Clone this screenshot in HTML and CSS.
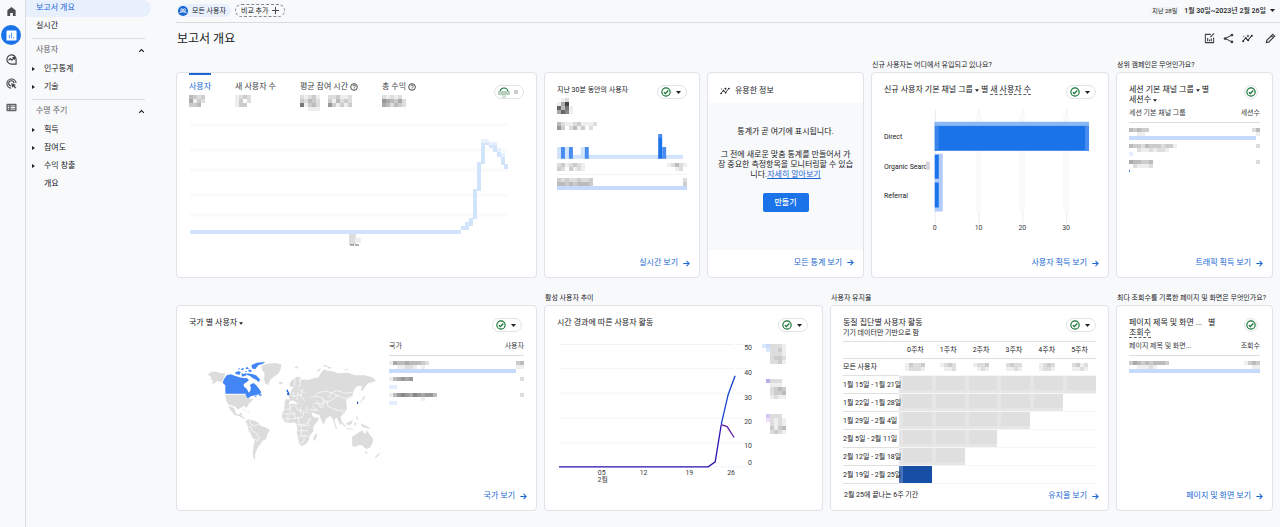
FILE: index.html
```html
<!DOCTYPE html>
<html lang="ko">
<head>
    <meta charset="UTF-8">
    <meta name="viewport" content="width=device-width, initial-scale=1.0">
    <title>보고서 개요</title>
    <link rel="stylesheet" href="styles.css">
</head>
<body>
    <svg class="defs" aria-hidden="true">
        <symbol id="i-check" viewBox="0 0 24 24"><circle cx="12" cy="12" r="10" fill="none" stroke="#137333" stroke-width="2.8"/><path d="M7 12.5l3.5 3.5L17.5 8.5" fill="none" stroke="#137333" stroke-width="3"/></symbol>
        <symbol id="i-caret" viewBox="0 0 10 6"><path d="M0 0h10L5 6z" fill="currentColor"/></symbol>
        <symbol id="i-arrow" viewBox="0 0 24 24"><path d="M1 12h20M12 3l9 9-9 9" fill="none" stroke="currentColor" stroke-width="3.6"/></symbol>
        <symbol id="i-help" viewBox="0 0 24 24"><circle cx="12" cy="12" r="10" fill="none" stroke="currentColor" stroke-width="2.8"/><path d="M8.5 9.5a3.5 3.5 0 1 1 5.2 3c-1.2.8-1.7 1.2-1.7 2.5M12 16.500v2.500" fill="none" stroke="currentColor" stroke-width="2.6"/></symbol>
        <symbol id="i-up" viewBox="0 0 24 24"><path d="M4 17l8-8 8 8" fill="none" stroke="currentColor" stroke-width="4"/></symbol>
        <symbol id="i-spark" viewBox="0 0 24 24"><path d="M2 18l6-7 5 5 9-11" fill="none" stroke="currentColor" stroke-width="2.2"/><circle cx="2.5" cy="18" r="2" fill="currentColor"/><circle cx="8.5" cy="11" r="2" fill="currentColor"/><circle cx="13.5" cy="16" r="2" fill="currentColor"/><circle cx="21.5" cy="6" r="2" fill="currentColor"/><path d="M13 3l1 2.500L16.500 6.500 14 7.500 13 10l-1-2.500L9.500 6.500 12 5.500zM4 5l.6 1.500L6 7l-1.400.6L4 9l-.6-1.400L2 7l1.400-.5z" fill="currentColor"/></symbol>
    </svg>

    <div id="wrapper">
        <nav class="rail">
            <a href="#" aria-label="홈"><svg viewBox="0 0 24 24"><path d="M3 22V9.5L12 2l9 7.5V22h-6v-7H9v7z" fill="#4a4d51"/></svg></a>
            <a href="#" class="current" aria-label="보고서"><svg viewBox="0 0 24 24"><rect x="1" y="1" width="22" height="22" rx="2" fill="#fff"/><path d="M7.500 18v-7M12 18V6M16.500 18v-3" stroke="#5a9bf5" stroke-width="2.4"/></svg></a>
            <a href="#" aria-label="탐색"><svg viewBox="0 0 24 24"><path d="M22 22h-9.500A10 10 0 1 1 22 12z" fill="none" stroke="#3c4043" stroke-width="2.5"/><path d="M5.500 14l4-4 3.500 3.500L18 8.500M14 8h4.500v4.500" fill="none" stroke="#3c4043" stroke-width="2.4"/></svg></a>
            <a href="#" aria-label="광고"><svg viewBox="0 0 24 24"><path d="M11 22a10 10 0 1 1 11-11M11.500 17.500a5.800 5.800 0 1 1 6-6" fill="none" stroke="#3c4043" stroke-width="2.4"/><path d="M11 11l11 4-4 2 4.500 4.500-2 1.500L16 18.500 14.500 22z" fill="#3c4043"/></svg></a>
            <a href="#" aria-label="구성"><svg viewBox="0 0 24 24"><rect x="1" y="4" width="22" height="16" rx="2" fill="#5f6368"/><path d="M4 8.500h3M4 12h3M4 15.500h3M10 8.500h10M10 12h10M10 15.500h10" stroke="#f8f9fa" stroke-width="2"/></svg></a>
        </nav>

        <nav class="sidebar">
            <a href="#" class="item active">보고서 개요</a>
            <a href="#" class="item">실시간</a>
            <section>
                <button class="group">사용자<svg><use href="#i-up"/></svg></button>
                <a href="#" class="sub more">인구통계</a>
                <a href="#" class="sub more">기술</a>
            </section>
            <section>
                <button class="group">수명 주기<svg><use href="#i-up"/></svg></button>
                <a href="#" class="sub more">획득</a>
                <a href="#" class="sub more">참여도</a>
                <a href="#" class="sub more">수익 창출</a>
                <a href="#" class="sub">개요</a>
            </section>
        </nav>

        <main>
            <header class="topbar">
                <button class="chip"><svg viewBox="0 0 24 24"><circle cx="12" cy="12" r="12" fill="#1967d2"/><circle cx="9" cy="9" r="2.5" fill="none" stroke="#fff" stroke-width="2"/><circle cx="15.5" cy="9" r="2.5" fill="none" stroke="#fff" stroke-width="2"/><path d="M4 16c2-3 14-3 16 0" fill="none" stroke="#fff" stroke-width="2.5"/></svg>모든 사용자</button>
                <button class="chip dashed">비교 추가<svg viewBox="0 0 12 12"><path d="M6 0v12M0 6h12" stroke="#3c4043" stroke-width="1.6"/></svg></button>
                <button class="date"><span class="range">지난 28일</span>1월 30일~2023년 2월 26일<svg class="caret"><use href="#i-caret"/></svg></button>
            </header>

            <div class="titlebar">
                <h1>보고서 개요</h1>
                <div class="tools">
                    <button aria-label="맞춤설정"><svg viewBox="0 0 24 24"><path d="M15 3H3v18h18V10" fill="none" stroke="#3c4043" stroke-width="2.2"/><path d="M8 18v-7M12 18v-4M16 18v-6M14 9l8-8" stroke="#3c4043" stroke-width="2.4"/></svg></button>
                    <button aria-label="공유"><svg viewBox="0 0 24 24"><path d="M20 4L5 12l15 8" fill="none" stroke="#3c4043" stroke-width="2.2"/><circle cx="19.5" cy="4.5" r="3" fill="#3c4043"/><circle cx="4.5" cy="12" r="3" fill="#3c4043"/><circle cx="19.5" cy="19.5" r="3" fill="#3c4043"/></svg></button>
                    <button aria-label="통계"><svg><use href="#i-spark"/></svg></button>
                    <button class="edit" aria-label="수정"><svg viewBox="0 0 24 24"><path d="M3 21l1-5L17 3l4 4L8 20zM14 6l4 4" fill="none" stroke="#3c4043" stroke-width="2.5"/></svg></button>
                </div>
            </div>

            <div class="grid row1">
                <section class="cell">
                    <h2></h2>
                    <div class="card">
                        <div class="body overview">
                            <div class="head">
                                <div class="metrics">
                                    <button class="metric active"><span>사용자</span><svg class="mosaic" data-cells="bcdc|aecd|ccbf"></svg></button>
                                    <button class="metric"><span>새 사용자 수</span><svg class="mosaic" data-cells="edcd|ecfd|eccf"></svg></button>
                                    <button class="metric"><span>평균 참여 시간<svg class="help"><use href="#i-help"/></svg></span><svg class="mosaic" data-cells="dedcef.ddceed|cdbcdf.cebdcd|7ecbdf.9cecec|ffeeef"></svg></button>
                                    <button class="metric"><span>총 수익<svg class="help"><use href="#i-help"/></svg></span><svg class="mosaic" data-cells="dededf|9abcad|abdbcd"></svg></button>
                                </div>
                                <button class="pill" aria-label="데이터 품질"><svg class="masked" viewBox="0 0 20 12"><path d="M2 6a4 4 0 0 1 8 0" fill="none" stroke="#137333" stroke-width="1.2"/><path d="M0 5h12v4H0z" fill="#b5d0bd"/><path d="M4 9h4v3H4z" fill="#cfe3d5"/><path d="M16 4h4v4h-4z" fill="#ccc"/></svg></button>
                            </div>
                            <svg class="chart" viewBox="0 0 335 132">
                                <path d="M1 11h318M1 36h318M1 56h318M1 81h318M1 101h318" stroke="#fafafa" stroke-width="3"/>
                                <g fill="#d2e3fc">
                                    <rect x="1" y="116" width="271" height="4"/>
                                    <rect x="272" y="112" width="8" height="4"/><rect x="276" y="108" width="4" height="6"/><rect x="280" y="104" width="4" height="8"/>
                                    <rect x="284" y="75" width="4" height="30"/><rect x="288" y="48" width="4" height="29"/><rect x="292" y="26" width="4" height="24"/>
                                    <rect x="296" y="27" width="4" height="4"/><rect x="300" y="30" width="8" height="4"/><rect x="304" y="34" width="4" height="4"/><rect x="308" y="38" width="4" height="5"/><rect x="312" y="43" width="4" height="8"/><rect x="315" y="50" width="4" height="5"/>
                                </g>
                                <g fill="#e8f0fe"><rect x="292" y="25" width="8" height="4"/><rect x="300" y="28" width="8" height="3"/><rect x="308" y="34" width="4" height="4"/><rect x="312" y="39" width="4" height="4"/></g>
                                <rect x="160" y="120" width="7" height="11" fill="#ddd"/><rect x="166" y="124" width="6" height="5" fill="#eee"/><path d="M161 131h4M166 131h4" stroke="#666"/>
                            </svg>
                        </div>
                    </div>
                </section>

                <section class="cell">
                    <h2></h2>
                    <div class="card">
                        <div class="body">
                            <div class="head">
                                <h3 class="small">지난 30분 동안의 사용자</h3>
                                <button class="pill" aria-label="데이터 품질"><svg class="check"><use href="#i-check"/></svg><svg class="caret"><use href="#i-caret"/></svg></button>
                            </div>
                            <div class="realtime">
                                <svg class="mosaic" data-cells=".ed.|ea4f|6b7e|a68e"></svg>
                                <svg class="mosaic" data-cells="bdeedceeed|9cfdbecfdf"></svg>
                                <svg class="chart" viewBox="0 0 131 28">
                                    <rect y="22" width="127" height="4" fill="#d2e3fc"/>
                                    <path d="M0 14h4v12H0zM8 14h4v12H8zM24 14h4v12h-4z" fill="#d2e3fc"/>
                                    <path d="M4 14h4v12H4zM12 14h4v12h-4zM28 14h4v12h-4z" fill="#4a8df0"/>
                                    <path d="M102 4h4v22h-4z" fill="#1a73e8"/><path d="M102 1h4v4h-4zM106 14h4v12h-4z" fill="#4a8df0"/>
                                </svg>
                                <div class="mrow"><svg class="mosaic" data-cells="dcedcde|cdfcede"></svg><svg class="mosaic" data-cells="edbde|ffedf"></svg></div>
                                <hr>
                                <div class="mrow"><svg class="mosaic" data-cells="cdcddcddc|bbcbcbbbc"></svg><svg class="mosaic" data-cells="d|c"></svg></div>
                                <div class="meter"></div>
                            </div>
                        </div>
                        <a href="#" class="foot">실시간 보기<svg><use href="#i-arrow"/></svg></a>
                    </div>
                </section>

                <section class="cell">
                    <h2></h2>
                    <div class="card">
                        <h3 class="insight-head"><svg><use href="#i-spark"/></svg>유용한 정보</h3>
                        <div class="insight">
                            <p>통계가 곧 여기에 표시됩니다.</p>
                            <p>그 전에 새로운 맞춤 통계를 만들어서 가<br>장 중요한 측정항목을 모니터링할 수 있습<br>니다.<a href="#">자세히 알아보기</a></p>
                            <button class="btn">만들기</button>
                        </div>
                        <a href="#" class="foot">모든 통계 보기<svg><use href="#i-arrow"/></svg></a>
                    </div>
                </section>

                <section class="cell">
                    <h2>신규 사용자는 어디에서 유입되고 있나요?</h2>
                    <div class="card">
                        <div class="body">
                            <div class="head">
                                <h3><button>신규 사용자 기본 채널 그룹<svg class="caret"><use href="#i-caret"/></svg></button> 별 <span class="dotted">새 사용자 수</span></h3>
                                <button class="pill" aria-label="데이터 품질"><svg class="check"><use href="#i-check"/></svg><svg class="caret"><use href="#i-caret"/></svg></button>
                            </div>
                            <svg class="chart" viewBox="0 3 213 131">
                                <path d="M51.500 9v115M95.500 9v115M139.500 9v115M183.500 9v115" stroke="#e8eaed"/>
                                <path d="M95 14v98M139 14v98M183 14v98" stroke="#fafafa" stroke-width="6"/>
                                <rect x="51" y="22" width="155" height="29" fill="#1a73e8"/>
                                <rect x="51" y="22" width="155" height="4" fill="#8ab8f4"/><rect x="202" y="26" width="4" height="25" fill="#4a8df0"/><rect x="51" y="26" width="4" height="25" fill="#3b84ec"/>
                                <path d="M51 54h8v58h-8z" fill="#aecbfa"/><path d="M51 55h4v24h-4zM51 83h4v25h-4z" fill="#1a73e8"/>
                                <g class="labels strong"><text x="0" y="39">Direct</text><text x="0" y="69">Organic Searc</text><text x="0" y="98">Referral</text></g>
                                <rect x="42" y="62" width="4" height="8" fill="#d5d0da"/>
                                <g class="labels middle"><text x="51" y="131">0</text><text x="95" y="131">10</text><text x="139" y="131">20</text><text x="183" y="131">30</text></g>
                            </svg>
                        </div>
                        <a href="#" class="foot">사용자 획득 보기<svg><use href="#i-arrow"/></svg></a>
                    </div>
                </section>

                <section class="cell">
                    <h2>상위 캠페인은 무엇인가요?</h2>
                    <div class="card">
                        <div class="body">
                            <div class="head">
                                <h3><button>세션 기본 채널 그룹<svg class="caret"><use href="#i-caret"/></svg></button> 별<br><button>세션수<svg class="caret"><use href="#i-caret"/></svg></button></h3>
                                <button class="pill round" aria-label="데이터 품질"><svg class="check"><use href="#i-check"/></svg></button>
                            </div>
                            <table class="list">
                                <thead><tr><th>세션 기본 채널 그룹</th><th>세션수</th></tr></thead>
                                <tbody>
                                    <tr><td><svg class="mosaic" data-cells="bcbcc|ffeef"></svg></td><td><svg class="mosaic" data-cells="db|fe"></svg></td></tr>
                                    <tr class="bar"><td colspan="2"><div class="meter" style="width: 97%"></div></td></tr>
                                    <tr><td><svg class="mosaic" data-cells="bccdbcccdcce|ffdeededdef."></svg></td><td><svg class="mosaic" data-cells="d|f"></svg></td></tr>
                                    <tr class="bar"><td colspan="2"><div class="meter pale" style="width: 3%"></div></td></tr>
                                    <tr><td><svg class="mosaic" data-cells="abbccb|fdeeed"></svg></td><td><svg class="mosaic" data-cells="d|f"></svg></td></tr>
                                    <tr class="bar"><td colspan="2"><div class="meter dark" style="width: 1%"></div></td></tr>
                                </tbody>
                            </table>
                        </div>
                        <a href="#" class="foot">트래픽 획득 보기<svg><use href="#i-arrow"/></svg></a>
                    </div>
                </section>
            </div>

            <div class="grid row2">
                <section class="cell">
                    <h2></h2>
                    <div class="card">
                        <div class="body">
                            <div class="head">
                                <h3><button>국가 별 사용자<svg class="caret"><use href="#i-caret"/></svg></button></h3>
                                <button class="pill shift" aria-label="데이터 품질"><svg class="check"><use href="#i-check"/></svg><svg class="caret"><use href="#i-caret"/></svg></button>
                            </div>
                            <div class="geo">
                                <svg class="map" viewBox="-33 -12 576 360">
                                    <g fill="#dcdcdc">
                                        <path d="M22 72l8-2 4-5 14 0 10 4 18 1-8 24-8 2-8-4-8 8-10 1 6-9-8-4 2-6z"/>
                                        <path d="M76 134h60l6 8 10 5 10-1-8 8-8 9-4 8-4 3-4-7-14 8-6 4-8-9-18-4-8-10-2-10z"/>
                                        <path d="M80 168l16 2 8 7 4 14 7 3 7-6 4 1-2 8 6 4 7 6-8-2-11-6-14-4-10-11-8-12zM124 176l14 4-2 2zM140 184l8 1-1 3z"/>
                                        <path d="M184 48l16-7 28-2 17 5-3 14-6 12-16 12-9 7-7 16-8-4-4-14 2-16-8-13z"/>
                                        <path d="M236 97l8-2 6 3-6 4-7-1z"/>
                                        <path d="M137 213l8-5 8 1 12 4 10 5 6 9 14 5 12 6 2 6-8 10-2 13-11 5-6 9-6 8-5 7-3 9-3 10 1 14-5-3-3-16 2-20 4-18-8-11-10-17-1-10z"/>
                                        <path d="M268 102l8-12 12-9 12-1 2 6-6 4 2 14-8 6-2 8-6 1-2-9-8 2zM298 84l8 6 4 14-8 8-10-2 8-12z"/>
                                        <path d="M258 148h12l-4-6-2-8 10-6 12-4 10-6h18l6 12-2 10-6 10 8 4 12 1-2 6-16 0-8-3-8-4-10-4 8 10-2 2-14-11-10 2-4 10-10 3-3-7z"/>
                                        <path d="M300 92l12-4 12 2 20-6 12-2 6-12 10-12 10 4 16 2 16 6 30-2 20 8 30 0 22 6 12 10-8 4-16 4-8 10-10 14-3-2 2-14-12 0-10 10-6 20-10 8-8 2 0 12 2 16-8 14-12 10 4 12-2 12-4-2-6-14-4-6-6 8 5 18 5 10-6-4-6-18-4-12-8-6-12 10-5 17-6-10-8-20-10-3-12-5-6 14-15 12-6 4-5-12-12-22 2-10-16 1-8-3 2-7 10-2 14 1-2-8-8-3-10-2-6-12 4-18z"/>
                                        <path d="M254 164l16-2 14-1 6 7 12 2 22-1 6 12 8 18 8 4 11-2-4 12-12 14-2 18-10 12-2 12-10 14-11 5-8-5-4-20-4-18 2-14-8-14-12 2-16-2-10-14 0-12 6-10z"/>
                                        <path d="M347 253l4-4-2 14-5 9-4-2 2-12z"/>
                                        <path d="M456 260l12-7 10-7 10-5 4 8 6 2 2-11 8 12 10 13 1 10-8 17-10 5-8-3-4-7-10-2-14 5-8-1z"/>
                                        <path d="M421 210l8 8 9 13-4-1-12-14zM440 218l14-5 4-5-2 12-6 5-10-1zM462 218l8 0-4 12zM440 234l22 3-1 2-20-2zM480 220l14 5 12 7 6 6-13-4-10-2zM468 198l5 2 2 12-5-6zM484 160l2-8 6-5 3-9-5 1-4 10-5 8zM494 304l9 2-5 7zM526 320l8-8 8-4-6 9-12 9zM283 52l12-4-4 8zM366 48l14-4-2 6zM350 66l5-8 10-3-8 8zM376 47l20 6-8 4zM428 56l20 2-8 2z"/>
                                    </g>
                                    <g fill="#4285f4">
                                        <path d="M80 76l12-3 12 4 12 4 12 3 12 1 7 5-9 8-7 4 1 8 8 6 7 12 5-8-1-8-1-8 10-5 8 6 8 10 8 12-4 5-14 4-12 2-10 7-4-4-4-10H76V106l-8-8 4-10z"/>
                                        <path d="M154 46l16-8 26-2-8 6-12 3-10 12-9-1zM104 68l12-5 6 3-3 8-10-1zM122 58l6-4 5 3-6 4zM136 54l6-3 5 5-7 2zM142 70l14 2 12 4 12 12-3 9-8-7-10-5-9-7-10-4zM124 70l8 2 6-4 2 8-14 4zM148 58l8 4-4 5-8-4zM114 56l6-3-3 7zM134 63l7 0-1 4zM178 132l9 2-5 4-6-2zM164 137l8 0-6 5zM130 88l10-4 4 6-9 2z"/>
                                        <path d="M262 118l4 8 3 8-8 1 2-8-4-4z" fill="#0b57d0"/><path d="M471 154l4 3-1 5-3-1z" fill="#174ea6"/>
                                    </g>
                                    <path d="M82 168l16 0 10 6M138 228l14 2 4 12 14 8 8 14-8 12M150 206v16l14 6 14-6M150 242l4 28M156 266l14 4M160 278l-4 44M252 178h16l12-14M268 162l4 28M286 164l4 14 26 8M302 170v22M320 170l2 20M244 192h44M264 192v24M280 186l6 20 22-6 4-14M250 206h38M294 200l4 24 22-2 8-16M286 222l22 6 22-2M290 242h36M296 260l16-4 16 4M304 228v32M312 256v18l-12 6M324 224l8-20M336 164l8 12 10 6M328 178l24 4M342 160l20 2 6 12M352 152l10 22M362 162l18-6M372 168l-4-24-22-6-14 6M346 138l8-10 24-5 22 7 12 8-14 10-16 8-14-8M386 144l8-16 18-6 24 8 22-4 8 6-8 8-26 6-22-12M384 150l-2 16 16 10 18 6 12-2M404 176l10 6M426 182l6 16M434 180l10 14M270 130l12 10 12-6 14 2M280 126l2 14M294 126v12l-4 12M308 116l-6 20 12 16M296 118l20 12M286 84l-4 26M300 84l2 20-10 8M466 150l-10-6 12-10" fill="none" stroke="#fff" stroke-width="2"/>
                                    <path d="M146 96l6 2-2 8 2 8-5 8-5-10-8-6 1-6z" fill="#fff"/>
                                </svg>
                                <table class="list">
                                    <thead><tr><th>국가</th><th>사용자</th></tr></thead>
                                    <tbody>
                                        <tr><td><svg class="mosaic" data-cells="eabbabbbcd|ffeeddefef"></svg></td><td><svg class="mosaic" data-cells="cb|ee"></svg></td></tr>
                                        <tr class="bar"><td colspan="2"><div class="meter" style="width: 94%"></div></td></tr>
                                        <tr><td><svg class="mosaic" data-cells="eba9a9|ffffff"></svg></td><td><svg class="mosaic" data-cells="d|f"></svg></td></tr>
                                        <tr class="bar"><td colspan="2"><div class="meter pale" style="width: 6%"></div></td></tr>
                                        <tr><td><svg class="mosaic" data-cells="eb989a89a99b|ffffffffefff"></svg></td><td><svg class="mosaic" data-cells="d|f"></svg></td></tr>
                                        <tr class="bar"><td colspan="2"><div class="meter pale" style="width: 6%"></div></td></tr>
                                    </tbody>
                                </table>
                            </div>
                        </div>
                        <a href="#" class="foot">국가 보기<svg><use href="#i-arrow"/></svg></a>
                    </div>
                </section>

                <section class="cell">
                    <h2>활성 사용자 추이</h2>
                    <div class="card">
                        <div class="body">
                            <div class="head">
                                <h3>시간 경과에 따른 사용자 활동</h3>
                                <button class="pill shift" aria-label="데이터 품질"><svg class="check"><use href="#i-check"/></svg><svg class="caret"><use href="#i-caret"/></svg></button>
                            </div>
                            <div class="trend">
                                <svg class="chart" viewBox="0 0 198 148">
                                    <path d="M2 8.500h176m2 0h16M2 32.500h176m2 0h16M2 57.500h176m2 0h16M2 82.500h176m2 0h16M2 107.500h176m2 0h16M2 131.500h176m2 0h16" stroke="#f1f3f4"/>
                                    <g class="labels end"><text x="196" y="14">50</text><text x="196" y="39">40</text><text x="196" y="64">30</text><text x="196" y="88">20</text><text x="196" y="113">10</text><text x="196" y="130">0</text></g>
                                    <g class="labels middle"><text x="45" y="140">05</text><text x="46" y="147">2월</text><text x="87" y="140">12</text><text x="133" y="140">19</text><text x="175" y="140">26</text></g>
                                    <path d="M165 89l7-30 7-19" fill="none" stroke="#1442d0" stroke-width="1.3"/>
                                    <path d="M165 89l6 2 7 11" fill="none" stroke="#681da8" stroke-width="1.3"/>
                                    <path d="M2 131.500h150l7-5 6-37" fill="none" stroke="#2a12b0" stroke-width="1.3"/>
                                </svg>
                                <div class="legend">
                                    <svg class="mosaic" data-cells="bBddde|fbddce|..ddde|..dccd|..ddce"></svg>
                                    <svg class="mosaic" data-cells="fVdddf|..eeef|..dcbc|..dccb|..edee"></svg>
                                    <svg class="mosaic" data-cells="fPdddf|fpdede|..dede|..cecb|..dcde"></svg>
                                </div>
                            </div>
                        </div>
                    </div>
                </section>

                <section class="cell">
                    <h2>사용자 유지율</h2>
                    <div class="card">
                        <div class="body">
                            <div class="head">
                                <h3>동질 집단별 사용자 활동<small>기기 데이터만 기반으로 함</small></h3>
                                <button class="pill" aria-label="데이터 품질"><svg class="check"><use href="#i-check"/></svg><svg class="caret"><use href="#i-caret"/></svg></button>
                            </div>
                            <table class="cohort">
                                <thead><tr><th></th><th>0주차</th><th>1주차</th><th>2주차</th><th>3주차</th><th>4주차</th><th>5주차</th></tr></thead>
                                <tbody>
                                    <tr class="all"><th>모든 사용자</th><td><svg class="mosaic" data-cells="ecddc|eddde"></svg></td><td><svg class="mosaic" data-cells="edcd|feed"></svg></td><td><svg class="mosaic" data-cells="eddc|fede"></svg></td><td><svg class="mosaic" data-cells="dcdd|eede"></svg></td><td><svg class="mosaic" data-cells="edcd|edde"></svg></td><td><svg class="mosaic" data-cells="dced|eede"></svg></td></tr>
                                    <tr><th>1월 15일 - 1월 21일</th><td class="on"></td><td class="on"></td><td class="on"></td><td class="on"></td><td class="on"></td><td class="on"></td></tr>
                                    <tr><th>1월 22일 - 1월 28일</th><td class="on"></td><td class="on"></td><td class="on"></td><td class="on"></td><td class="on"></td><td></td></tr>
                                    <tr><th>1월 29일 - 2월 4일</th><td class="on"></td><td class="on"></td><td class="on"></td><td class="on"></td><td></td><td></td></tr>
                                    <tr><th>2월 5일 - 2월 11일</th><td class="on"></td><td class="on"></td><td class="on"></td><td></td><td></td><td></td></tr>
                                    <tr><th>2월 12일 - 2월 18일</th><td class="on"></td><td class="on"></td><td></td><td></td><td></td><td></td></tr>
                                    <tr><th>2월 19일 - 2월 25일</th><td class="full"></td><td></td><td></td><td></td><td></td><td></td></tr>
                                </tbody>
                            </table>
                        </div>
                        <div class="foot-row"><span>2월 25에 끝나는 6주 기간</span><a href="#" class="foot">유지율 보기<svg><use href="#i-arrow"/></svg></a></div>
                    </div>
                </section>

                <section class="cell">
                    <h2>최다 조회수를 기록한 페이지 및 화면은 무엇인가요?</h2>
                    <div class="card">
                        <div class="body">
                            <div class="head">
                                <h3>페이지 제목 및 화면 ... &nbsp; 별<br><span class="dotted">조회수</span></h3>
                                <button class="pill round" aria-label="데이터 품질"><svg class="check"><use href="#i-check"/></svg></button>
                            </div>
                            <table class="list">
                                <thead><tr><th>페이지 제목 및 화면...</th><th>조회수</th></tr></thead>
                                <tbody>
                                    <tr><td><svg class="mosaic" data-cells="cabcbcbbbc|ffeeedefff"></svg></td><td><svg class="mosaic" data-cells="ecbc|ffee"></svg></td></tr>
                                    <tr class="bar"><td colspan="2"><div class="meter" style="width: 100%"></div></td></tr>
                                </tbody>
                            </table>
                        </div>
                        <a href="#" class="foot">페이지 및 화면 보기<svg><use href="#i-arrow"/></svg></a>
                    </div>
                </section>
            </div>
        </main>
    </div>

    <script>
        // masked values: one character per 4px block, hex digit = grey level
        const tints = {B: "#c5dcfb", b: "#dbe9fd", V: "#b3b0f0", P: "#dcc8f0", p: "#ecdff8"};
        const size = 4;

        for(const svg of document.querySelectorAll('.mosaic')){
            const rows = svg.dataset.cells.split("|");
            const w = rows[0].length * size;
            const h = rows.length * size;
            const legend = svg.closest('.legend');
            svg.setAttribute("width", w);
            svg.setAttribute("height", h);
            rows.forEach((row, y) => {
                [...row].forEach((c, x) => {
                    if(c == ".") return;
                    const rect = document.createElementNS("http://www.w3.org/2000/svg", "rect");
                    rect.setAttribute("x", x * size);
                    rect.setAttribute("y", y * size);
                    rect.setAttribute("width", size);
                    rect.setAttribute("height", size);
                    const tint = legend && x < 2 ? tints[c] : null;
                    rect.setAttribute("fill", tint || `#${c}${c}${c}`);
                    svg.appendChild(rect);
                });
            });
        }
    </script>
</body>
</html>
```
FILE: styles.css
```css
*{
    margin: 0;
    padding: 0;
    box-sizing: border-box;
}
body{
    font-family: Roboto, "Noto Sans CJK KR", sans-serif;
    font-size: 8px;
    line-height: 10px;
    color: #202124;
    background-color: #f8f9fa;
}
a{
    color: #1967d2;
    text-decoration: none;
}
button{
    font: inherit;
    color: inherit;
    background: none;
    border: none;
    cursor: pointer;
}
svg{
    display: block;
    flex: none;
}
.defs{
    display: none;
}
#wrapper{
    min-height: 100vh;
    display: flex;
}

/* left icon rail */
.rail{
    flex: none;
    width: 26px;
    padding-right: 2px;
    border-right: 1px solid #dadce0;
}
.rail a{
    height: 20px;
    width: 20px;
    margin: 1px 1px 4px;
    display: flex;
    justify-content: center;
    align-items: center;
    border-radius: 50%;
}
.rail svg{
    width: 11px;
    height: 11px;
}
.rail .current{
    background-color: #1a73e8;
}

/* report navigation */
.sidebar{
    flex: none;
    width: 125px;
}
.item, .group, .sub{
    height: 18px;
    display: flex;
    align-items: center;
    padding-left: 10px;
    color: #202124;
}
.item.active{
    height: 17px;
    padding-bottom: 2px;
    color: #1967d2;
    background-color: #e8f0fe;
    border-radius: 0 9px 9px 0;
}
.sidebar section{
    width: 113px;
    margin: 3px 0 3px 6px;
    padding-top: 2px;
    border-top: 1px solid #dadce0;
}
.group{
    width: 100%;
    justify-content: space-between;
    padding: 0 0 0 4px;
    margin-bottom: 1px;
    color: #5f6368;
}
.group svg{
    width: 7px;
    height: 7px;
    color: #202124;
}
.sub{
    padding-left: 12px;
}
.sub.more{
    padding-left: 0;
}
.sub.more::before{
    content: "";
    margin-right: 9px;
    border-left: 3px solid #202124;
    border-top: 2px solid transparent;
    border-bottom: 2px solid transparent;
}

main{
    flex: 1;
    min-width: 0;
    padding-left: 25px;
}
.topbar{
    height: 23px;
    display: flex;
    align-items: center;
    gap: 4px;
    padding: 0 5px 1px 1px;
    border-bottom: 1px solid #dadce0;
    font-size: 7px;
}
.chip{
    height: 13px;
    display: flex;
    align-items: center;
    gap: 4px;
    padding: 0 5px 0 1px;
    background-color: #e8f0fe;
    border-radius: 7px;
}
.chip svg{
    width: 10px;
    height: 10px;
}
.chip.dashed{
    padding: 0 5px;
    background: none;
    border: 1px dashed #80868b;
}
.chip.dashed svg{
    width: 7px;
    height: 7px;
}
.date{
    margin-left: auto;
    display: flex;
    align-items: center;
    font-weight: 500;
}
.range{
    margin-right: 5px;
    padding: 0 2px;
    font-size: 6px;
    font-weight: 400;
    line-height: 8px;
    background-color: #f1f3f4;
}
.date .caret{
    margin-left: 4px;
}
.titlebar{
    height: 33px;
    display: flex;
    justify-content: space-between;
    align-items: center;
    padding: 0 4px 2px 1px;
}
h1{
    font-size: 12px;
    font-weight: 400;
    line-height: 16px;
}
.tools{
    display: flex;
    gap: 8px;
}
.tools svg{
    width: 11px;
    height: 11px;
}
.edit{
    margin-left: 4px;
}

/* cards */
.grid{
    display: grid;
    gap: 7px;
    margin: 0 7px 11px 0;
}
.row1{
    grid-template-columns: 361fr 156fr 157fr 238fr 157fr;
}
.row2{
    grid-template-columns: 361fr 279fr 279fr 157fr;
}
.cell{
    min-width: 0;
    display: flex;
    flex-direction: column;
}
h2{
    height: 16px;
    padding-left: 1px;
    font-size: 7px;
    font-weight: 400;
    line-height: 18px;
    white-space: nowrap;
}
.card{
    flex: 1;
    min-height: 206px;
    display: flex;
    flex-direction: column;
    background-color: white;
    border: 1px solid #dfe2e8;
    border-radius: 4px;
}
.body{
    flex: 1;
    padding: 12px 12px 0;
}
.head{
    height: 18px;
    display: flex;
    justify-content: space-between;
    align-items: flex-start;
    white-space: nowrap;
}
h3{
    font-size: 8px;
    font-weight: 400;
    line-height: 10px;
}
h3.small{
    font-size: 7px;
}
h3 small{
    display: block;
    font-size: 7px;
}
h3 button{
    display: inline-flex;
    align-items: center;
    gap: 2px;
}
.caret{
    width: 5px;
    height: 3px;
}
h3 .caret{
    width: 4px;
}
.dotted{
    border-bottom: 1px dashed #5f6368;
}
.pill{
    flex: none;
    width: 30px;
    height: 14px;
    display: flex;
    justify-content: space-between;
    align-items: center;
    padding: 0 5px 0 3px;
    border: 1px solid #e0e2e6;
    border-radius: 7px;
}
.pill.shift{
    margin-right: 2px;
}
.pill.round{
    width: 14px;
    padding: 0;
    justify-content: center;
    margin-right: 2px;
}
.check{
    width: 10px;
    height: 10px;
}
.foot{
    height: 22px;
    display: flex;
    justify-content: flex-end;
    align-items: center;
    gap: 5px;
    padding: 0 9px 6px;
}
.foot svg{
    width: 7px;
    height: 7px;
}
.foot-row{
    display: flex;
    justify-content: space-between;
    font-size: 7px;
}
.foot-row span{
    padding: 2px 0 0 13px;
}
.foot-row .foot{
    font-size: 8px;
}
.chart{
    width: 100%;
    height: auto;
}
.labels{
    font-size: 7px;
    fill: #3c4043;
}
.labels.strong{
    fill: #202124;
}
.labels.middle{
    text-anchor: middle;
}
.labels.end{
    text-anchor: end;
}
.meter{
    height: 4px;
    background-color: #c6dafb;
}
.meter.pale{
    background-color: #e3edfd;
}
.meter.dark{
    height: 2px;
    background-color: #4285f4;
}

/* overview metrics */
.overview{
    padding-top: 0;
}
.overview .head{
    height: 41px;
}
.metrics{
    display: flex;
    align-items: flex-start;
    gap: 24px;
}
.metric{
    padding-top: 7px;
    border-top: 2px solid transparent;
    color: #3c4043;
}
.metric.active{
    color: #1967d2;
    border-top-color: #1967d2;
}
.metric span{
    display: flex;
    align-items: center;
    gap: 2px;
    margin-bottom: 3px;
}
.help{
    width: 8px;
    height: 8px;
}
.overview .pill{
    margin-top: 12px;
}
.masked{
    width: 20px;
    height: 12px;
}

/* realtime */
.realtime{
    margin-top: -5px;
}
.realtime .mosaic{
    margin-bottom: 8px;
}
.realtime .mosaic + .mosaic{
    margin-bottom: 3px;
}
.mrow{
    display: flex;
    justify-content: space-between;
    align-items: center;
    margin-top: 2px;
}
.realtime .mrow .mosaic{
    margin: 0;
}
hr{
    margin: 3px 0;
    border: none;
    border-top: 1px solid #f1f3f4;
}

/* insights */
.insight-head{
    height: 30px;
    display: flex;
    align-items: center;
    gap: 5px;
    padding: 5px 0 0 12px;
}
.insight-head svg{
    width: 10px;
    height: 10px;
}
.insight{
    flex: 1;
    padding-top: 24px;
    text-align: center;
    white-space: nowrap;
    background-color: #f8f9fa;
}
.insight p{
    margin-bottom: 13px;
}
.insight a{
    text-decoration: underline;
}
.insight-head ~ .foot{
    height: 27px;
    padding-bottom: 2px;
}
.btn{
    width: 46px;
    height: 19px;
    color: white;
    font-weight: 500;
    background-color: #1a73e8;
    border-radius: 2px;
}

/* tables */
table{
    width: 100%;
    border-collapse: collapse;
    font-size: 7px;
}
th{
    font-weight: 400;
    text-align: left;
    white-space: nowrap;
}
.list{
    margin-top: 4px;
}
.list th{
    height: 15px;
    padding-bottom: 3px;
    color: #3c4043;
    border-bottom: 1px solid #dadce0;
}
.list th:last-child{
    text-align: right;
}
.list td{
    height: 12px;
    vertical-align: bottom;
}
.list tbody tr:first-child td{
    height: 14px;
}
.list td:last-child .mosaic{
    margin-left: auto;
}
.list .bar td{
    height: 4px;
}

.geo{
    display: flex;
    align-items: flex-start;
    gap: 8px;
}
.map{
    flex: 1;
    min-width: 0;
    margin-top: 10px;
}
.geo .list{
    width: 135px;
}

.trend{
    display: flex;
    align-items: flex-start;
    gap: 8px;
}
.trend .chart{
    flex: 1;
    min-width: 0;
}
.legend{
    width: 48px;
    display: flex;
    flex-direction: column;
    gap: 15px;
    padding-top: 8px;
}

.cohort{
    margin-top: 5px;
    table-layout: fixed;
    border-top: 1px solid #e0e0e0;
}
.cohort tr{
    height: 18px;
}
.cohort thead tr, .cohort .all{
    height: 17px;
}
.cohort th{
    border-bottom: 1px solid #e0e0e0;
}
.cohort th:first-child{
    width: 56px;
}
.cohort thead th + th{
    text-align: center;
}
.cohort td{
    border-bottom: 1px solid #f6f6f6;
}
.cohort .mosaic{
    margin: 0 auto;
}
.cohort .on{
    background-color: #dfdfdf;
    box-shadow: inset 4px -3px #e6e6e6;
}
.cohort .full{
    background-color: #174ea6;
    box-shadow: inset 4px 0 #4a73b8;
}
```
